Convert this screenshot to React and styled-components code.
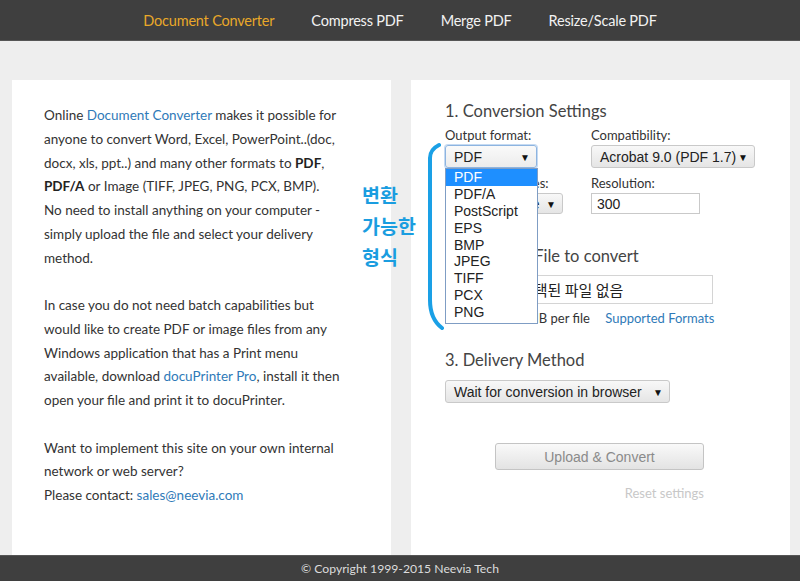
import React from 'react';
import styled, { createGlobalStyle } from 'styled-components';

const GlobalStyle = createGlobalStyle`
  html, body {
    margin: 0;
    padding: 0;
    background: #eeeeee;
  }
  body {
    font-family: Lato, "Open Sans", sans-serif;
    color: #333;
  }
  * { box-sizing: border-box; }
`;

const navItems = ['Document Converter', 'Compress PDF', 'Merge PDF', 'Resize/Scale PDF'];
const formats = ['PDF', 'PDF/A', 'PostScript', 'EPS', 'BMP', 'JPEG', 'TIFF', 'PCX', 'PNG'];

const App = () => {
  return (
    <Page>
      <GlobalStyle />
      <TopNav>
        {navItems.map((item, i) => (
          <NavLink key={item} $active={i === 0}>{item}</NavLink>
        ))}
      </TopNav>

      <Main>
        <Panel $left>
          <Text>
            Online <A>Document Converter</A> makes it possible for
            <br />
            anyone to convert Word, Excel, PowerPoint..(doc,
            <br />
            docx, xls, ppt..) and many other formats to <b>PDF</b>,
            <br />
            <b>PDF/A</b> or Image (TIFF, JPEG, PNG, PCX, BMP).
            <br />
            No need to install anything on your computer -
            <br />
            simply upload the file and select your delivery
            <br />
            method.
            <br />
            <br />
            In case you do not need batch capabilities but
            <br />
            would like to create PDF or image files from any
            <br />
            Windows application that has a Print menu
            <br />
            available, download <A>docuPrinter Pro</A>, install it then
            <br />
            open your file and print it to docuPrinter.
            <br />
            <br />
            Want to implement this site on your own internal
            <br />
            network or web server?
            <br />
            Please contact: <A>sales@neevia.com</A>
          </Text>
        </Panel>

        <Panel>
          <Heading>1. Conversion Settings</Heading>
          <FieldGrid>
            <Field>
              <Label>Output format:</Label>
              <Select $focused $width={92}>PDF<Caret>▼</Caret></Select>
              <DropList>
                {formats.map((f, i) => (
                  <DropItem key={f} $selected={i === 0}>{f}</DropItem>
                ))}
              </DropList>
            </Field>
            <Field>
              <Label>Compatibility:</Label>
              <Select $width={164}>Acrobat 9.0 (PDF 1.7)<Caret>▼</Caret></Select>
            </Field>
            <Field>
              <Label>Multipage images:</Label>
              <Select $width={118} $small>One per page<Caret>▼</Caret></Select>
            </Field>
            <Field>
              <Label>Resolution:</Label>
              <TextInput>300</TextInput>
            </Field>
          </FieldGrid>

          <Heading $top={31}>2. Choose a File to convert</Heading>
          <FileBox>
            <FileButton>파일 선택</FileButton>
            선택된 파일 없음
          </FileBox>
          <Hint>
            Max. size: 100MB per file <A>Supported Formats</A>
          </Hint>

          <Heading $top={22}>3. Delivery Method</Heading>
          <Select $width={225} $gap={9}>Wait for conversion in browser<Caret>▼</Caret></Select>

          <Actions>
            <ConvertButton>Upload &amp; Convert</ConvertButton>
            <Reset>Reset settings</Reset>
          </Actions>
        </Panel>

        <Note>
          변환
          <br />
          가능한
          <br />
          형식
        </Note>
        <Bracket width="30" height="190" viewBox="0 0 30 190">
          <path
            d="M19 3 C13 6 10 10 10 16 L10 158 C10 172 14 180 22 186"
            fill="none"
            stroke="#1aa0e6"
            strokeWidth="4"
            strokeLinecap="round"
          />
        </Bracket>
      </Main>

      <Footer>© Copyright 1999-2015 Neevia Tech</Footer>
    </Page>
  );
};

const Page = styled.div`
  display: flex;
  flex-direction: column;
  height: 100vh;
`;

const TopNav = styled.nav`
  height: 41px;
  flex: none;
  background: #3f3f3f;
  border-bottom: 1px solid #555;
  display: flex;
  justify-content: center;
  align-items: center;
  gap: 37px;
`;

const NavLink = styled.a`
  font-size: 14.5px;
  letter-spacing: -0.2px;
  color: ${(p) => (p.$active ? '#e9a829' : '#f2f2f2')};
  cursor: pointer;
`;

const Main = styled.main`
  position: relative;
  flex: 1;
  display: flex;
  gap: 20px;
  padding: 39px 10px 0 12px;
  min-height: 0;
`;

const Panel = styled.section`
  flex: 1 1 379px;
  min-width: 0;
  background: #fff;
  padding: ${(p) => (p.$left ? '24px 10px 0 32px' : '20px 66px 0 34px')};
  display: flex;
  flex-direction: column;
  align-items: flex-start;
`;

const Text = styled.p`
  margin: 0;
  font-size: 13.5px;
  line-height: 23.75px;
  color: #333;
  white-space: nowrap;

  b {
    font-weight: 700;
    color: #222;
  }
`;

const A = styled.a`
  color: #2f7ab8;
  cursor: pointer;
`;

const Heading = styled.h2`
  margin: ${(p) => p.$top || 0}px 0 0;
  font-size: 16.5px;
  font-weight: 400;
  color: #444;
  line-height: 22px;
`;

const FieldGrid = styled.div`
  display: grid;
  grid-template-columns: 146px auto;
  row-gap: 6px;
  margin-top: 4px;
`;

const Field = styled.div`
  position: relative;
  display: flex;
  flex-direction: column;
`;

const Label = styled.label`
  font-size: 13px;
  color: #333;
  line-height: 18px;
  margin-bottom: 1px;
`;

const Select = styled.div`
  position: relative;
  width: ${(p) => p.$width}px;
  height: ${(p) => (p.$small ? 21 : 23)}px;
  margin-top: ${(p) => p.$gap || 0}px;
  padding: 0 22px 0 8px;
  display: flex;
  align-items: center;
  font-family: "Liberation Sans", Arial, sans-serif;
  font-size: 14px;
  color: #222;
  white-space: nowrap;
  overflow: hidden;
  border-radius: 3px;
  border: 1px solid ${(p) => (p.$focused ? '#8db4e0' : '#c9c9c9')};
  background: ${(p) =>
    p.$focused
      ? 'linear-gradient(#fafafa, #ececec)'
      : 'linear-gradient(#f8f8f8, #e5e5e5)'};
  box-shadow: ${(p) => (p.$focused ? '0 0 0 1px #c5daf2' : 'none')};
`;

const Caret = styled.span`
  position: absolute;
  right: 6px;
  top: 50%;
  transform: translateY(-50%);
  font-size: 10px;
  color: #111;
`;

const DropList = styled.ul`
  position: absolute;
  z-index: 5;
  top: 42px;
  left: 0;
  width: 93px;
  margin: 0;
  padding: 0 0 2px;
  list-style: none;
  background: #fff;
  border: 1px solid #7f9dc4;
`;

const DropItem = styled.li`
  height: 16.9px;
  line-height: 16.9px;
  padding-left: 8px;
  font-family: "Liberation Sans", Arial, sans-serif;
  font-size: 14px;
  color: ${(p) => (p.$selected ? '#fff' : '#222')};
  background: ${(p) => (p.$selected ? '#1e8fff' : 'transparent')};
`;

const TextInput = styled.div`
  width: 109px;
  height: 21px;
  padding: 0 5px;
  display: flex;
  align-items: center;
  font-family: "Liberation Sans", Arial, sans-serif;
  font-size: 14px;
  color: #222;
  border: 1px solid #c9c9c9;
  background: #fff;
`;

const FileBox = styled.div`
  margin-top: 8px;
  width: 268px;
  height: 29px;
  display: flex;
  align-items: center;
  gap: 6px;
  padding: 0 4px;
  border: 1px solid #d4d4d4;
  font-family: "Noto Sans CJK KR", sans-serif;
  font-size: 15px;
  color: #222;
`;

const FileButton = styled.span`
  width: 64px;
  padding: 1px 0;
  text-align: center;
  white-space: nowrap;
  border: 1px solid #aaa;
  border-radius: 2px;
  background: #eee;
  font-size: 12px;
`;

const Hint = styled.div`
  margin-top: 5px;
  font-size: 13px;
  color: #333;
  line-height: 18px;

  a {
    margin-left: 12px;
  }
`;

const Actions = styled.div`
  align-self: stretch;
  display: flex;
  flex-direction: column;
  align-items: flex-end;
  margin-top: 40px;
  padding-right: 20px;
`;

const ConvertButton = styled.button`
  width: 209px;
  height: 27px;
  border: 1px solid #c4c4c4;
  border-radius: 3px;
  background: linear-gradient(#f9f9f9, #e3e3e3);
  font-family: "Liberation Sans", Arial, sans-serif;
  font-size: 14px;
  color: #8a8a8a;
`;

const Reset = styled.a`
  margin-top: 15px;
  font-size: 13px;
  color: #c8c8c8;
`;

const Note = styled.div`
  position: absolute;
  left: 362px;
  top: 138px;
  font-family: "Noto Sans CJK KR", sans-serif;
  font-weight: 700;
  font-size: 19.5px;
  line-height: 31px;
  color: #1a9de0;
`;

const Bracket = styled.svg`
  position: absolute;
  left: 420px;
  top: 101px;
`;

const Footer = styled.footer`
  flex: none;
  height: 26px;
  background: #3f3f3f;
  border-top: 1px solid #555;
  display: flex;
  align-items: center;
  justify-content: center;
  font-size: 12.2px;
  color: #dcdcdc;
`;

export default App;
